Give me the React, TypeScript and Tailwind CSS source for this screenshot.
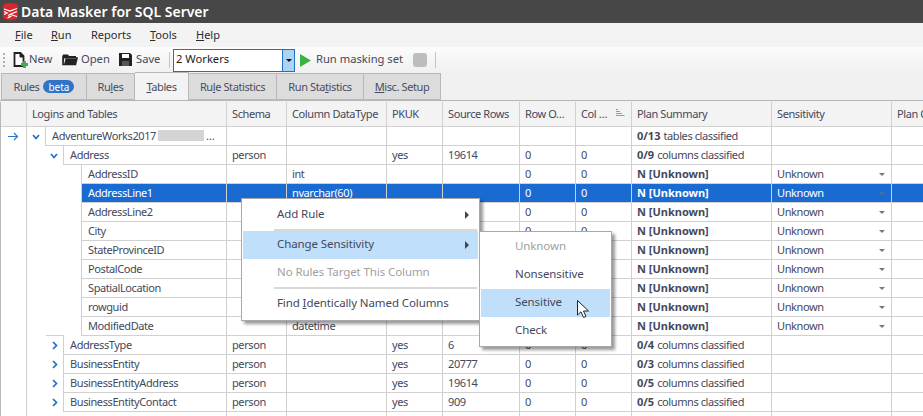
import React from "react";

const F = "font-['Noto_Sans','Open_Sans',sans-serif]";

function Logo() {
  return (
    <svg width="15" height="17" viewBox="0 0 15 17" className="ml-[3px]">
      <path d="M0 3C0 1 3.500 0 7.500 0S15 1 15 3V14C15 16 11.500 17 7.500 17S0 16 0 14Z" fill="#d8262c" />
      <path d="M1 6l6 2 7-2.500M1 8.500l3 1.500-3 1.500M14 8.500l-7 3 7 2M5 12.500l2.500 1-3 1.500" stroke="#fff" strokeWidth="1.300" fill="none" />
    </svg>
  );
}

function NewIcon() {
  return (
    <svg width="15" height="17" viewBox="0 0 15 17">
      <path d="M1.500 1H7.500L10.500 4V14H1.500Z" fill="#fff" stroke="#222" strokeWidth="1.800" />
      <path d="M7 1V5H11" fill="#222" stroke="#222" strokeWidth="1" />
      <path d="M8 12.500H15M11.500 9V16" stroke="#3fae49" strokeWidth="2.800" />
    </svg>
  );
}

function OpenIcon() {
  return (
    <svg width="16" height="13" viewBox="0 0 16 13">
      <path d="M1 2.500V11.500H13.500L15 5H3" fill="none" stroke="#222" strokeWidth="1.600" />
      <path d="M1 1.500H6L7 3H14V5H2.500L1 11Z" fill="#222" />
      <path d="M2 11.500H13L14.500 6H3.500Z" fill="#222" />
    </svg>
  );
}

function SaveIcon() {
  return (
    <svg width="13" height="13" viewBox="0 0 13 13">
      <path d="M0 0H11L13 2V13H0Z" fill="#222" />
      <rect x="3" y="1" width="7" height="4" fill="#fff" />
      <rect x="3" y="8" width="7" height="5" fill="#555" />
    </svg>
  );
}

function Chevron({ open }: { open: boolean }) {
  return open ? (
    <svg width="8" height="6" viewBox="0 0 8 6">
      <path d="M1 1L4 4.500L7 1" fill="none" stroke="#1f6fc9" strokeWidth="1.700" />
    </svg>
  ) : (
    <svg width="6" height="9" viewBox="0 0 6 9">
      <path d="M1 1L4.500 4.500L1 8" fill="none" stroke="#1f6fc9" strokeWidth="1.700" />
    </svg>
  );
}

type Row = {
  name: React.ReactNode;
  level: 0 | 1 | 2;
  schema?: string;
  type?: string;
  pkuk?: string;
  source?: string;
  nums?: boolean;
  planBold?: string;
  planText?: string;
  leaf?: boolean;
  open?: boolean;
  selected?: boolean;
  wideLine?: boolean;
  current?: boolean;
};

const leaf = (name: string, type?: string, extra?: Partial<Row>): Row => ({ name, level: 2, type, leaf: true, nums: true, ...extra });
const table = (name: string, source: string, bold: string): Row => ({
  name,
  level: 1,
  schema: "person",
  pkuk: "yes",
  source,
  nums: true,
  planBold: bold,
  planText: "columns classified",
});

const ROWS: Row[] = [
  {
    name: (
      <span className="flex items-center">
        AdventureWorks2017
        <span className="w-[46px] h-[11px] bg-[#d4d4d4] ml-[2px]" />
        <span className="ml-[2px]">…</span>
      </span>
    ),
    level: 0,
    open: true,
    current: true,
    planBold: "0/13",
    planText: "tables classified",
  },
  { ...table("Address", "19614", "0/9"), open: true },
  leaf("AddressID", "int"),
  leaf("AddressLine1", "nvarchar(60)", { selected: true }),
  leaf("AddressLine2"),
  leaf("City"),
  leaf("StateProvinceID"),
  leaf("PostalCode"),
  leaf("SpatialLocation"),
  leaf("rowguid"),
  leaf("ModifiedDate", "datetime", { wideLine: true }),
  table("AddressType", "6", "0/4"),
  table("BusinessEntity", "20777", "0/3"),
  table("BusinessEntityAddress", "19614", "0/5"),
  table("BusinessEntityContact", "909", "0/5"),
];

function TreeCell({ row }: { row: Row }) {
  const indentClass = row.level === 0 ? "w-[18px]" : row.level === 1 ? "w-[36px]" : "w-[54px]";
  return (
    <div className="w-[200px] shrink-0 h-[19px] flex border-r border-[#d0d0d0]">
      <div className={`${indentClass} shrink-0 h-full flex items-center justify-end pr-[5px]`}>
        {!row.leaf && <Chevron open={!!row.open} />}
      </div>
      <div
        className={`flex-1 min-w-0 h-full border-l border-b border-[#d0d0d0] pl-[6px] pb-[2px] flex items-center whitespace-nowrap overflow-hidden ${
          row.selected ? "bg-[#1a6bd1] text-white" : ""
        }`}
      >
        {row.name}
      </div>
    </div>
  );
}

function Cell({ w, selected, children }: { w: string; selected?: boolean; children?: React.ReactNode }) {
  return (
    <div
      className={`${w} pl-[5px] pb-[2px] shrink-0 h-[19px] border-r border-b border-[#d0d0d0] flex items-center whitespace-nowrap overflow-hidden ${
        selected ? "bg-[#1a6bd1] text-white" : ""
      }`}
    >
      {children}
    </div>
  );
}

function GridRow({ row }: { row: Row }) {
  const s = row.selected;
  return (
    <div className="flex h-[19px] relative">
      <div className="w-[26px] shrink-0 h-full border-r border-[#d0d0d0] flex items-center justify-center">
        {row.current && (
          <svg width="11" height="9" viewBox="0 0 11 9">
            <path d="M0 4.500H9.500M6 1L9.500 4.500L6 8" fill="none" stroke="#2b77cf" strokeWidth="1.200" />
          </svg>
        )}
      </div>
      <TreeCell row={row} />
      <Cell w="w-[60px]" selected={s}>{row.schema}</Cell>
      <Cell w="w-[100px]" selected={s}>{row.type}</Cell>
      <Cell w="w-[56px]" selected={s}>{row.pkuk}</Cell>
      <Cell w="w-[77px]" selected={s}>{row.source}</Cell>
      <Cell w="w-[56px]" selected={s}>{row.nums ? "0" : ""}</Cell>
      <Cell w="w-[56px]" selected={s}>{row.nums ? "0" : ""}</Cell>
      <Cell w="w-[140px]" selected={s}>
        {row.leaf ? (
          <b className="font-bold tracking-normal">N [Unknown]</b>
        ) : row.planBold ? (
          <>
            <b className="font-bold tracking-normal">{row.planBold}</b>
            <span className="ml-[3px]">{row.planText}</span>
          </>
        ) : null}
      </Cell>
      <Cell w="w-[120px]" selected={s}>
        {row.leaf && (
          <div className="flex items-center justify-between w-full pr-[6px]">
            <span>Unknown</span>
            <span className={`w-0 h-0 mt-[2px] border-l-[3px] border-r-[3px] border-t-[3px] border-l-transparent border-r-transparent ${s ? "border-t-[#4a6f9f]" : "border-t-[#777777]"}`} />
          </div>
        )}
      </Cell>
      <Cell w="w-[32px]" selected={s} />
      {row.wideLine && <div className="absolute left-[45px] bottom-0 w-[18px] h-px bg-[#d0d0d0]" />}
    </div>
  );
}

function HeaderCell({ w, children }: { w: string; children?: React.ReactNode }) {
  return (
    <div className={`${w} shrink-0 pl-[5px] pb-[2px] h-full border-r border-[#d0d0d0] flex items-center whitespace-nowrap overflow-hidden`}>
      {children}
    </div>
  );
}

function Tab({ w, active, children }: { w: string; active?: boolean; children: React.ReactNode }) {
  return (
    <div
      className={`${w} shrink-0 flex items-center justify-center border border-[#b8b8b8] border-l-0 first:border-l ${
        active ? "h-[28px] -mt-px bg-[#f3f3f3] border-b-0 relative z-10" : "h-[27px] bg-[#dcdcdc]"
      }`}
    >
      {children}
    </div>
  );
}

function MenuItem({ children, hi, disabled, arrow, h = "h-[28px]" }: { children: React.ReactNode; hi?: boolean; disabled?: boolean; arrow?: boolean; h?: string }) {
  return (
    <div className={`${h} flex items-center pl-[34px] pr-[9px] justify-between ${hi ? "bg-[#bfdffb]" : ""} ${disabled ? "text-[#a0a0a0]" : ""}`}>
      <span className="pb-[2px]">{children}</span>
      {arrow && <span className="w-0 h-0 border-t-[4px] border-b-[4px] border-l-[4px] border-t-transparent border-b-transparent border-l-[#444444]" />}
    </div>
  );
}

export default function App() {
  return (
    <div className={`${F} w-[923px] h-[416px] overflow-hidden relative bg-white text-[11px] tracking-[-0.4px] leading-none text-[#44485c]`}>
      <div className="h-[23px] bg-[#474747] flex items-center gap-[3px] text-white font-semibold text-[14px] tracking-normal whitespace-nowrap">
        <Logo />
        <span>Data Masker for SQL Server</span>
      </div>

      <div className="h-[24px] pb-[2px] bg-[#f3f3f3] flex items-center pl-[15px] text-[#2c2c2c] text-[11px] tracking-normal">
        <span className="w-[36px]"><u>F</u>ile</span>
        <span className="w-[40px]"><u>R</u>un</span>
        <span className="w-[59px]">Reports</span>
        <span className="w-[46px]"><u>T</u>ools</span>
        <span><u>H</u>elp</span>
      </div>

      <div className="h-[26px] bg-gradient-to-b from-[#fcfcfc] to-[#f0f0f0] flex items-center text-[11.200px] tracking-normal text-[#44485c]">
        <div className="ml-[3px] w-[2px] h-[14px] border-l-2 border-dotted border-[#b0b0b0]" />
        <div className="ml-[8px] w-[49px] flex items-center gap-[1px]"><NewIcon /><span className="pb-[2px]">New</span></div>
        <div className="w-[57px] flex items-center gap-[3px]"><OpenIcon /><span className="pb-[2px]">Open</span></div>
        <div className="w-[50px] flex items-center gap-[4px]"><SaveIcon /><span className="pb-[2px]">Save</span></div>
        <div className="w-px h-[16px] bg-[#c4c4c4]" />
        <div className="ml-[3px] w-[122px] h-[23px] border border-[#1f72c0] bg-white flex items-center text-[#1c1c1c]">
          <span className="flex-1 pl-[2px] pb-[2px]">2 Workers</span>
          <span className="w-[12px] h-full bg-[#abd3f3] border-l border-[#1f72c0] flex items-center justify-center">
            <span className="w-0 h-0 border-l-[3px] border-r-[3px] border-t-[3px] border-l-transparent border-r-transparent border-t-[#111111]" />
          </span>
        </div>
        <svg width="11" height="13" viewBox="0 0 11 13" className="ml-[5px]">
          <path d="M0 0L11 6.500L0 13Z" fill="#3cb043" />
        </svg>
        <span className="ml-[5px] w-[87px] pb-[2px] whitespace-nowrap">Run masking set</span>
        <div className="ml-[10px] w-[14px] h-[14px] rounded-[3px] bg-[#bdbdbd]" />
        <div className="ml-[8px] w-px h-[16px] bg-[#c4c4c4]" />
      </div>

      <div className="h-[27px] bg-[#f1f1f1] flex pl-[1px] items-start text-[#484c60]">
        <Tab w="w-[86px]">
          <span className="flex items-center gap-[4px]">
            Rules
            <span className="w-[31px] h-[13px] rounded-full bg-[#2f74c8] text-white text-[10px] tracking-normal flex items-center justify-center">beta</span>
          </span>
        </Tab>
        <Tab w="w-[48px]"><span>Ru<u>l</u>es</span></Tab>
        <Tab w="w-[54px]" active><span><u>T</u>ables</span></Tab>
        <Tab w="w-[88px]"><span>Ru<u>l</u>e Statistics</span></Tab>
        <Tab w="w-[87px]"><span>Run Sta<u>t</u>istics</span></Tab>
        <Tab w="w-[77px]"><span><u>M</u>isc. Setup</span></Tab>
      </div>

      <div className="border-l border-[#b8b8b8]">
        <div className="h-[2px] -ml-px bg-[#b8b8b8] border-b border-[#f1f1f1]" />
        <div className="h-[25px] flex bg-[#f3f3f3] border-b border-[#d0d0d0]">
          <HeaderCell w="w-[26px]" />
          <HeaderCell w="w-[200px]">Logins and Tables</HeaderCell>
          <HeaderCell w="w-[60px]">Schema</HeaderCell>
          <HeaderCell w="w-[100px]">Column DataType</HeaderCell>
          <HeaderCell w="w-[56px]">PKUK</HeaderCell>
          <HeaderCell w="w-[77px]">Source Rows</HeaderCell>
          <HeaderCell w="w-[56px]">Row O…</HeaderCell>
          <HeaderCell w="w-[56px]">
            <span className="flex-1">Col …</span>
            <svg width="9" height="8" viewBox="0 0 9 8" className="mr-[6px]">
              <path d="M0 .500H2M0 2.500H4M0 4.500H6M0 6.500H8.500" stroke="#9a9a9a" strokeWidth="1" />
            </svg>
          </HeaderCell>
          <HeaderCell w="w-[140px]">Plan Summary</HeaderCell>
          <HeaderCell w="w-[120px]">Sensitivity</HeaderCell>
          <HeaderCell w="w-[32px]">Plan O</HeaderCell>
        </div>
        {ROWS.map((r, i) => (
          <GridRow key={i} row={r} />
        ))}
        <div className="flex h-[6px]">
          <div className="w-[26px] border-r border-[#d0d0d0]" />
          <div className="w-[200px] border-r border-[#d0d0d0]" />
          <div className="w-[60px] border-r border-[#d0d0d0]" />
          <div className="w-[100px] border-r border-[#d0d0d0]" />
          <div className="w-[56px] border-r border-[#d0d0d0]" />
          <div className="w-[77px] border-r border-[#d0d0d0]" />
          <div className="w-[56px] border-r border-[#d0d0d0]" />
          <div className="w-[56px] border-r border-[#d0d0d0]" />
          <div className="w-[140px] border-r border-[#d0d0d0]" />
          <div className="w-[120px] border-r border-[#d0d0d0]" />
        </div>
      </div>

      <div className="absolute left-[241px] top-[198px] w-[239px] h-[123px] bg-white border border-[#a8a8a8] shadow-[3px_3px_3px_rgba(0,0,0,0.4)] p-px text-[11.500px] tracking-[-0.1px] text-[#44485c]">
        <MenuItem arrow h="h-[29px]">Add Rule</MenuItem>
        <div className="h-[2px] ml-[31px] mr-px bg-[#d8d8d8]" />
        <MenuItem hi arrow>Change Sensitivity</MenuItem>
        <MenuItem disabled>No Rules Target This Column</MenuItem>
        <div className="h-[2px] ml-[31px] mr-px bg-[#d8d8d8]" />
        <MenuItem h="h-[30px]"><span><span>Find </span><u>I</u><span>dentically Named Columns</span></span></MenuItem>
      </div>

      <div className="absolute left-[479px] top-[231px] w-[133px] h-[116px] bg-white border border-[#a8a8a8] shadow-[3px_3px_3px_rgba(0,0,0,0.4)] p-px text-[11.500px] tracking-[-0.1px] text-[#44485c]">
        <MenuItem disabled>Unknown</MenuItem>
        <MenuItem>Nonsensitive</MenuItem>
        <MenuItem hi>Sensitive</MenuItem>
        <MenuItem>Check</MenuItem>
      </div>

      <svg width="13" height="19" viewBox="0 0 13 19" className="absolute left-[577px] top-[300px]">
        <path d="M.500.500V15L4 11.800L6.500 17.500L9 16.500L6.500 11H11.500Z" fill="#fff" stroke="#222" strokeWidth="1" />
      </svg>
    </div>
  );
}
